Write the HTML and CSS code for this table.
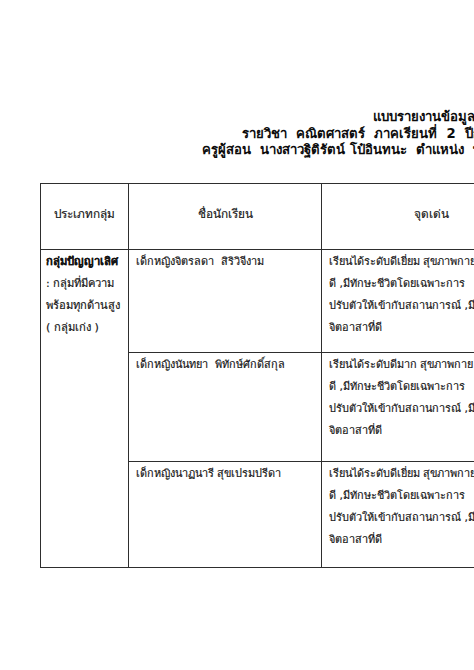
FILE: index.html
```html
<!DOCTYPE html>
<html lang="th">
<head>
<meta charset="utf-8">
<link rel="stylesheet" href="styles.css">
</head>
<body>
<div class="page">
  <div class="titles">
    <div class="t1">แบบรายงานข้อมูลนักเรียนรายบุคคล</div>
    <div class="t2">รายวิชา&nbsp; คณิตศาสตร์&nbsp; ภาคเรียนที่&nbsp; 2&nbsp; ปีการศึกษา 2563</div>
    <div class="t3">ครูผู้สอน&nbsp; นางสาวฐิติรัตน์ โป๋อินทนะ&nbsp; ตำแหน่ง&nbsp; พนักงานราชการ</div>
  </div>
  <table class="report">
    <colgroup>
      <col class="c1"><col class="c2"><col class="c3">
    </colgroup>
    <thead>
      <tr><th>ประเภทกลุ่ม</th><th>ชื่อนักเรียน</th><th>จุดเด่น</th></tr>
    </thead>
    <tbody>
      <tr class="r1">
        <td rowspan="3" class="group"><b>กลุ่มปัญญาเลิศ</b><br>: กลุ่มที่มีความ<br>พร้อมทุกด้านสูง<br>( กลุ่มเก่ง )</td>
        <td>เด็กหญิงจิตรลดา&nbsp; สิริวิจีงาม</td>
        <td>เรียนได้ระดับดีเยี่ยม สุขภาพกาย<br>ดี ,มีทักษะชีวิตโดยเฉพาะการ<br>ปรับตัวให้เข้ากับสถานการณ์ ,มี<br>จิตอาสาที่ดี</td>
      </tr>
      <tr class="r2">
        <td>เด็กหญิงนันทยา&nbsp; พิทักษ์ศักดิ์สกุล</td>
        <td>เรียนได้ระดับดีมาก สุขภาพกาย<br>ดี ,มีทักษะชีวิตโดยเฉพาะการ<br>ปรับตัวให้เข้ากับสถานการณ์ ,มี<br>จิตอาสาที่ดี</td>
      </tr>
      <tr class="r3">
        <td>เด็กหญิงนาฏนารี สุขเปรมปรีดา</td>
        <td>เรียนได้ระดับดีเยี่ยม สุขภาพกาย<br>ดี ,มีทักษะชีวิตโดยเฉพาะการ<br>ปรับตัวให้เข้ากับสถานการณ์ ,มี<br>จิตอาสาที่ดี</td>
      </tr>
    </tbody>
  </table>
</div>
</body>
</html>
```
FILE: styles.css
```css
html, body {
  margin: 0;
  padding: 0;
  background: #ffffff;
  overflow: hidden;
}
body {
  width: 474px;
  height: 670px;
  font-family: Tahoma, "Umpush", "Waree", "DejaVu Sans", "Noto Sans", sans-serif;
  color: #141414;
}
.page {
  width: 800px;
  padding-top: 109px;
}
.titles {
  font-weight: bold;
  font-size: 13.2px;
  line-height: 16.5px;
  color: #0c0c0c;
  white-space: nowrap;
}
.t1 { padding-left: 373px; }
.t2 { padding-left: 242px; }
.t3 { padding-left: 202px; }
.report {
  margin-top: 24px;
  margin-left: 40px;
  border-collapse: collapse;
  table-layout: fixed;
  width: 500px;
  font-size: 10.9px;
}
.c1 { width: 88px; }
.c2 { width: 193px; }
.c3 { width: 219px; }
.report th, .report td {
  border: 1px solid #2e2e2e;
  vertical-align: top;
  text-align: left;
  padding: 1px 6px 0 7px;
  line-height: 22px;
  white-space: nowrap;
  box-sizing: border-box;
  -webkit-text-stroke: 0.15px #141414;
}
.report th {
  height: 66px;
  font-weight: normal;
  font-size: 11.8px;
  text-align: center;
  vertical-align: middle;
  padding: 0 0 4px 0;
}
.report td.group {
  padding-left: 5px;
  font-size: 11.2px;
}
.report tr.r1 { height: 103px; }
.report tr.r2 { height: 109px; }
.report tr.r3 { height: 106px; }
```
